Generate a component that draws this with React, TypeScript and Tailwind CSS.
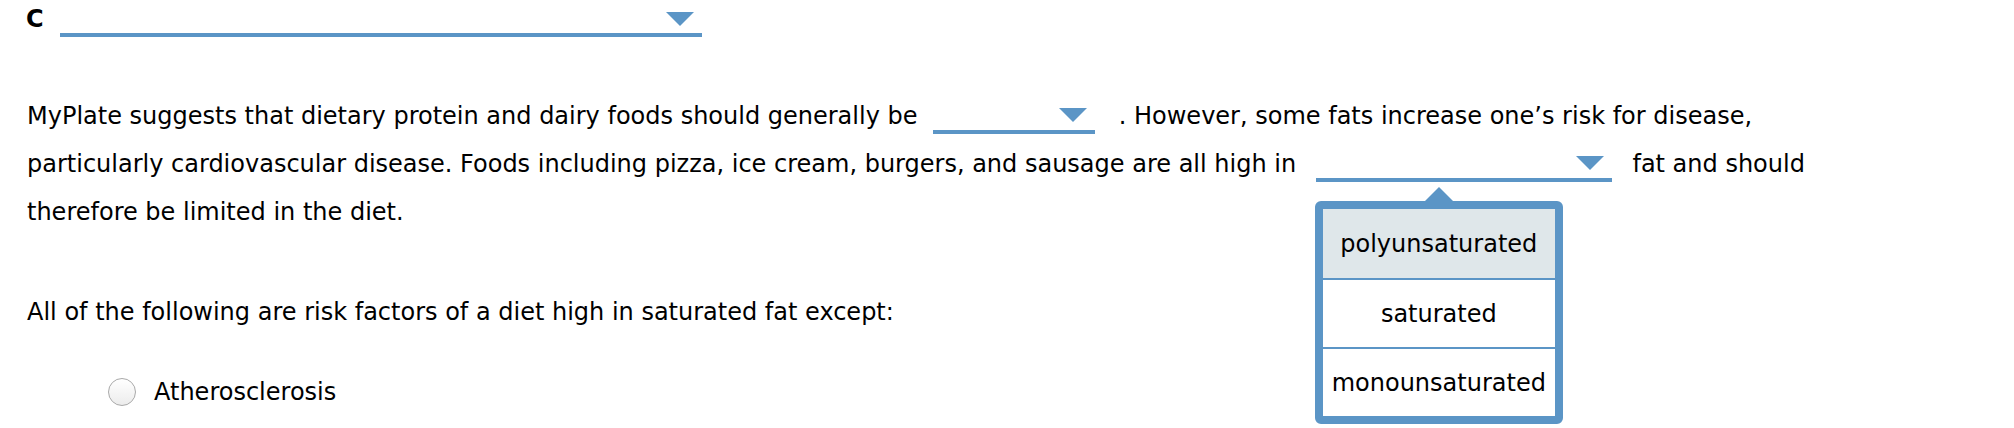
import React from 'react';

const BLUE = '#5b95c6';

const Arrow: React.FC<{ up?: boolean }> = ({ up }) => (
  <svg width="28" height="14" viewBox="0 0 28 14" className="block shrink-0">
    {up ? <polygon points="0,14 28,14 14,0" fill={BLUE} /> : <polygon points="0,0 28,0 14,14" fill={BLUE} />}
  </svg>
);

const Blank: React.FC<{ className: string; open?: boolean }> = ({ className, open }) => (
  <span className={`relative inline-flex items-end justify-end align-[2px] pr-2 pb-2 h-[30px] border-b-4 border-[#5b95c6] ${className}`}>
    <Arrow />
    {open && <OptionList />}
  </span>
);

const OPTIONS = ['polyunsaturated', 'saturated', 'monounsaturated'];

const OptionList: React.FC = () => (
  <span className="absolute left-[-1px] top-[calc(100%+9px)] w-[248px] flex flex-col items-center z-10">
    <Arrow up />
    <span className="w-full flex flex-col border-[8px] border-[#5b95c6] rounded-[6px] bg-white">
      {OPTIONS.map((o, i) => (
        <span
          key={o}
          className={`h-[69px] flex items-center justify-center text-black leading-none ${i > 0 ? 'border-t-2 border-[#5b95c6]' : ''} ${i === 0 ? 'bg-[#dfe7ea]' : ''}`}
        >
          {o}
        </span>
      ))}
    </span>
  </span>
);

export default function App() {
  return (
    <div className="w-[2014px] h-[428px] bg-white text-black overflow-hidden" style={{ fontFamily: '"DejaVu Sans", Verdana, sans-serif' }}>
      <div className="flex items-start pl-[26px]">
        <span className="font-bold text-[24px] leading-[24px] mt-[7px]">C</span>
        <span className="ml-[16px] w-[642px] h-[37px] border-b-4 border-[#5b95c6] flex items-end justify-end pr-2 pb-[7px]">
          <Arrow />
        </span>
      </div>

      <div className="pl-[27px] text-[24px]">
        <p className="mt-[55px] w-[1823px] leading-[48px]">
          MyPlate suggests that dietary protein and dairy foods should generally be{' '}
          <Blank className="w-[162px] ml-2 mr-[16px]" /> . However, some fats increase one’s risk for disease, particularly
          cardiovascular disease. Foods including pizza, ice cream, burgers, and sausage are all high in{' '}
          <Blank className="w-[296px] ml-[12px] mr-[13px]" open /> fat and should therefore be limited in the diet.
        </p>

        <p className="mt-[52px] leading-[48px]">All of the following are risk factors of a diet high in saturated fat except:</p>

        <div className="mt-[32px] ml-[81px] flex items-center leading-[48px]">
          <span className="w-[28px] h-[28px] rounded-full border border-[#a9a9a9] bg-gradient-to-b from-white to-[#ececec]" />
          <span className="ml-[18px]">Atherosclerosis</span>
        </div>
      </div>
    </div>
  );
}
